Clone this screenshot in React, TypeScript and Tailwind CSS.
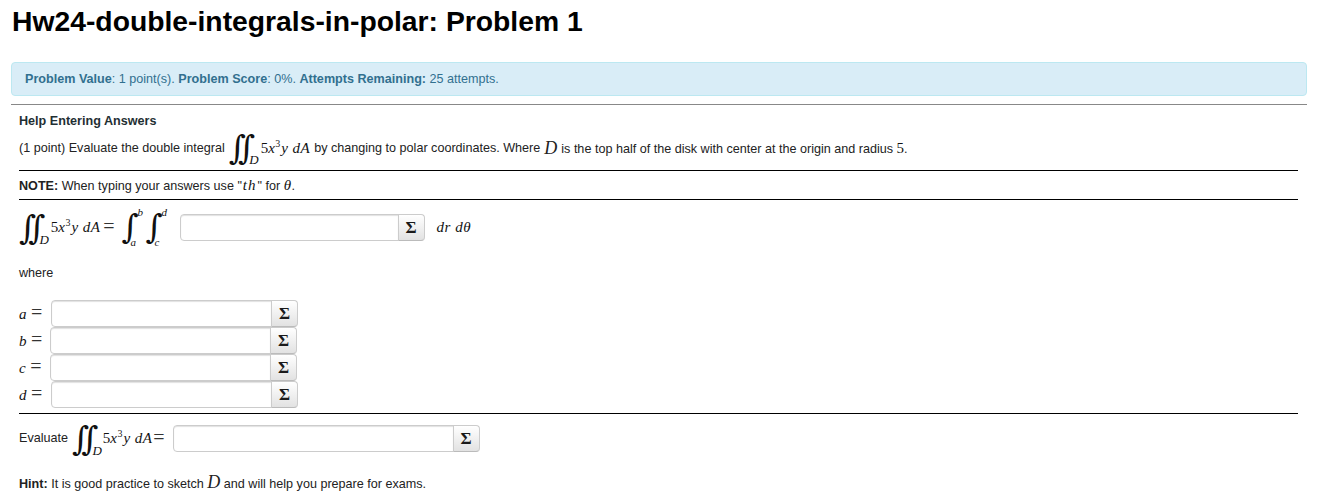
function Sigma() {
  return (
    <button className="w-[27px] h-full shrink-0 -ml-px flex items-center justify-center border border-[#ccc] border-b-[#bbb] rounded-r bg-gradient-to-b from-white to-[#e2e2e2] font-['Liberation_Serif',serif] font-bold text-[17px] text-[#1a1a1a]">
      Σ
    </button>
  );
}

function AnswerBox({ width }: { width: string }) {
  return (
    <div className="flex h-[27px] shrink-0">
      <input className={`${width} h-full border border-[#ccc] rounded-l bg-white shadow-[inset_0_1px_1px_rgba(0,0,0,0.12)]`} />
      <Sigma />
    </div>
  );
}

function M({ children }: { children: React.ReactNode }) {
  return <span className="font-['Liberation_Serif',serif] italic text-[15px] tracking-[0.5px] text-[#111]">{children}</span>;
}

function N({ children }: { children: React.ReactNode }) {
  return <span className="font-['Liberation_Serif',serif] text-[15px] text-[#111]">{children}</span>;
}

function Eq() {
  return <span className="font-['Liberation_Serif',serif] text-[20px] leading-none text-[#333]">=</span>;
}

function DoubleInt() {
  return (
    <span className="inline-flex items-end shrink-0 h-[34px] font-['DejaVu_Serif',serif] text-[#111]">
      <span className="text-[33px] leading-[34px] italic">∫</span>
      <span className="text-[33px] leading-[34px] italic -ml-[8px]">∫</span>
      <span className="font-['Liberation_Serif',serif] italic text-[13px] leading-[13px] -ml-[6px] -mb-[1px]">D</span>
    </span>
  );
}

function Integrand() {
  return (
    <span className="whitespace-nowrap">
      <N>5</N>
      <M>x</M>
      <span className="font-['Liberation_Serif',serif] text-[10px] align-[6px] leading-none">3</span>
      <span className="ml-px"><M>y</M></span>
      <span className="ml-[4px]"><M>dA</M></span>
    </span>
  );
}

function SingleInt({ lower, upper }: { lower: string; upper: string }) {
  return (
    <span className="inline-flex items-stretch shrink-0 h-[42px] font-['Liberation_Serif',serif] italic text-[#111]">
      <span className="font-['DejaVu_Serif',serif] text-[33px] leading-[40px] italic w-[16px]">∫</span>
      <span className="flex flex-col justify-between w-[8px] text-[11px] leading-[11px]">
        <span>{upper}</span>
        <span className="-ml-[7px] mb-[1px]">{lower}</span>
      </span>
    </span>
  );
}

function Limit({ name, labelWidth }: { name: string; labelWidth: string }) {
  return (
    <div className="flex items-center h-[27px]">
      <span className={`${labelWidth} shrink-0`}>
        <M>{name}</M>
        <span className="ml-[4px]"><Eq /></span>
      </span>
      <AnswerBox width="w-[221px]" />
    </div>
  );
}

export default function App() {
  return (
    <div className="w-[1340px] h-[495px] overflow-hidden bg-white font-['Liberation_Sans',sans-serif] text-[12.6px] text-[#222]">
      <div className="pl-[11px] pr-[33px]">
        <h1 className="h-[44px] pl-px text-[28.3px] leading-[42px] font-bold text-black">Hw24-double-integrals-in-polar: Problem 1</h1>
        <div className="mt-[18px] h-[34px] flex items-center px-[13px] rounded border border-[#bce8f1] bg-[#d9edf7] text-[#31708f]">
          <p>
            <b>Problem Value</b>: 1 point(s). <b>Problem Score</b>: 0%. <b>Attempts Remaining:</b> 25 attempts.
          </p>
        </div>
        <hr className="mt-2 border-[#888]" />

        <div className="pl-2 pr-[9px]">
          <p className="mt-[9px] h-[14px] leading-[14px] font-bold text-[#1f2f33]">Help Entering Answers</p>
          <div className="h-[42px] pb-[2px] flex items-center gap-1">
            <span>(1 point) Evaluate the double integral</span>
            <DoubleInt />
            <span className="-ml-[2px]"><Integrand /></span>
            <span>by changing to polar coordinates. Where</span>
            <span className="font-['Liberation_Serif',serif] italic text-[18px]">D</span>
            <span>is the top half of the disk with center at the origin and radius <N>5</N>.</span>
          </div>
          <hr className="border-black" />
          <p className="h-[28px] leading-[28px]">
            <b>NOTE:</b> When typing your answers use "<span className="mx-px font-['Liberation_Serif',serif] italic text-[15px] tracking-[1px] text-[#111]">th</span>" for <M>θ</M>.
          </p>
          <hr className="border-black" />

          <div className="mt-[14px] h-[27px] flex items-center">
            <DoubleInt />
            <span className="ml-[2px]"><Integrand /></span>
            <span className="ml-[3px] mr-[7px]"><Eq /></span>
            <SingleInt lower="a" upper="b" />
            <SingleInt lower="c" upper="d" />
            <span className="ml-[10px]"><AnswerBox width="w-[219px]" /></span>
            <span className="ml-3"><M>dr dθ</M></span>
          </div>

          <p className="mt-[25px] h-[14px] leading-[14px]">where</p>

          <div className="mt-[20px] flex flex-col">
            <Limit name="a" labelWidth="w-[32px]" />
            <Limit name="b" labelWidth="w-[31px]" />
            <Limit name="c" labelWidth="w-[31px]" />
            <Limit name="d" labelWidth="w-[32px]" />
          </div>
          <hr className="mt-[5px] border-black" />

          <div className="mt-[11px] h-[27px] flex items-center">
            <span>Evaluate</span>
            <span className="ml-1"><DoubleInt /></span>
            <span className="ml-[1px]"><Integrand /></span>
            <span className="ml-px"><Eq /></span>
            <span className="ml-[8px]"><AnswerBox width="w-[281px]" /></span>
          </div>

          <p className="mt-[23px] h-[14px] leading-[14px]">
            <b>Hint:</b> It is good practice to sketch <span className="font-['Liberation_Serif',serif] italic text-[18px]">D</span> and will help you prepare for exams.
          </p>
        </div>
      </div>
    </div>
  );
}
